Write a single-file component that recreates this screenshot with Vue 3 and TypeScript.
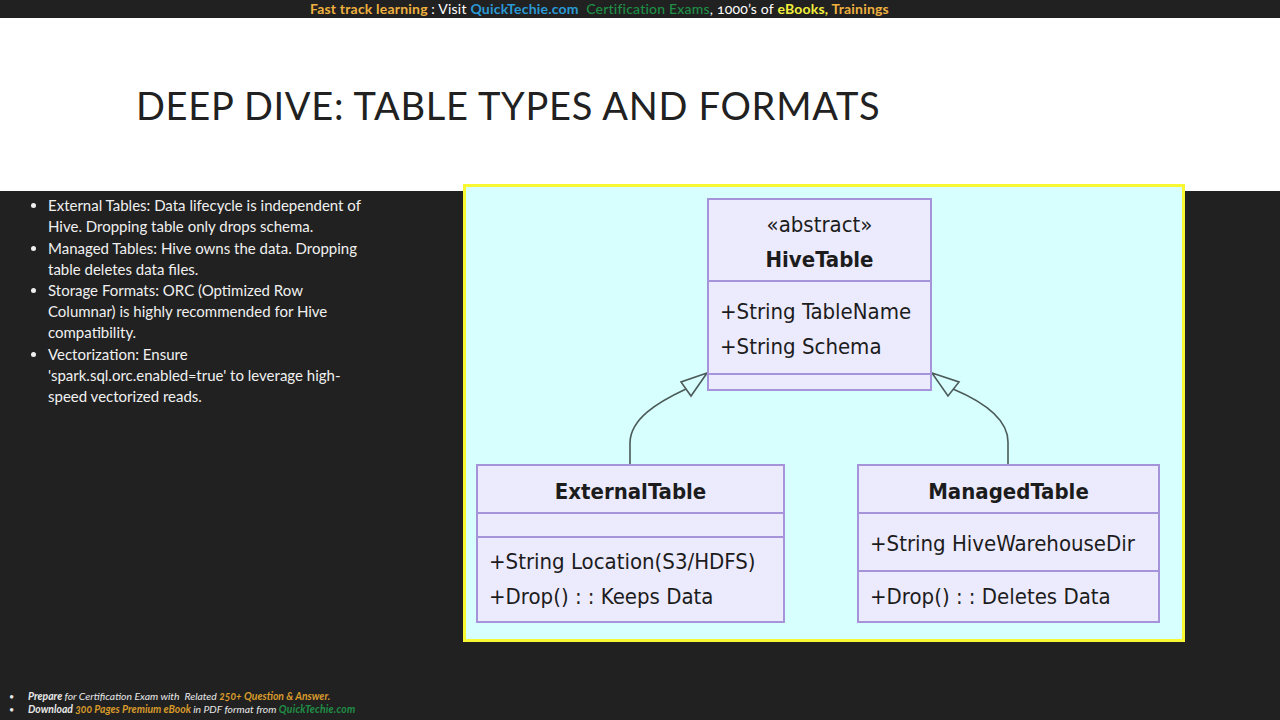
<script setup lang="ts">
interface Node { name: string; stereo?: string; sections: string[][]; cls: string }
const nodes: Node[] = [
  { name: 'HiveTable', stereo: '«abstract»', sections: [['+String TableName', '+String Schema'], []], cls: 'hive' },
  { name: 'ExternalTable', sections: [[], ['+String Location(S3/HDFS)', '+Drop() : : Keeps Data']], cls: 'ext' },
  { name: 'ManagedTable', sections: [['+String HiveWarehouseDir'], ['+Drop() : : Deletes Data']], cls: 'man' },
]
const bullets: string[] = [
  'External Tables: Data lifecycle is independent of Hive. Dropping table only drops schema.',
  'Managed Tables: Hive owns the data. Dropping table deletes data files.',
  'Storage Formats: ORC (Optimized Row Columnar) is highly recommended for Hive compatibility.',
  "Vectorization: Ensure 'spark.sql.orc.enabled=true' to leverage high-speed vectorized reads.",
]
</script>

<template>
  <div class="slide">
    <div class="topbar"><span class="orange">Fast track learning </span><span class="white">: Visit </span><span class="blue">QuickTechie.com</span><span class="green">&nbsp; Certification Exams</span><span class="white">, 1000’s of </span><span class="yellow">eBooks, </span><span class="orange">Trainings</span></div>
    <header class="head"><h1>DEEP DIVE: TABLE TYPES AND FORMATS</h1></header>
    <main class="body">
      <ul class="points">
        <li v-for="b in bullets" :key="b">{{ b }}</li>
      </ul>
      <figure class="diagram">
        <svg class="edges" viewBox="0 0 716 452" width="716" height="452">
          <g fill="none" stroke="#4d5a5a" stroke-width="1.6">
            <path d="M164 278 V255 C165 232 190 216 220 202" />
            <path d="M542 278 V255 C542 236 525 218 487 202" />
            <path d="M241 186 L215 195 L225 209 Z" />
            <path d="M466 186 L493 195 L482 209 Z" />
          </g>
        </svg>
        <section v-for="n in nodes" :key="n.name" class="node" :class="n.cls">
          <div class="title">
            <div v-if="n.stereo" class="stereo">{{ n.stereo }}</div>
            <div class="name">{{ n.name }}</div>
          </div>
          <div v-for="(s, i) in n.sections" :key="i" class="sec" :class="{ empty: !s.length }">
            <div v-for="l in s" :key="l" class="line">{{ l }}</div>
          </div>
        </section>
      </figure>
    </main>
    <footer class="foot">
      <div class="fl"><span class="dot">•</span><span><b>Prepare </b>for Certification Exam with &nbsp;Related <b class="gold">250+ Question &amp; Answer.</b></span></div>
      <div class="fl"><span class="dot">•</span><span><b>Download </b><b class="gold">300 Pages Premium eBook </b>in PDF format from <b class="dgreen">QuickTechie.com</b></span></div>
    </footer>
  </div>
</template>

<style>
html, body { margin: 0; background: #212121; }
</style>

<style scoped>
.slide { width: 1280px; height: 720px; background: #212121; display: flex; flex-direction: column; overflow: hidden; font-family: Lato, "Liberation Sans", sans-serif; font-variant-numeric: oldstyle-nums; }
.topbar { height: 18px; line-height: 18px; text-align: left; padding-left: 310px; font-size: 14px; letter-spacing: 0.2px; color: #fff; white-space: pre; }
.orange { color: #eeb03f; font-weight: 700; }
.white { color: #fff; }
.blue { color: #2a9ad6; font-weight: 700; }
.green { color: #1f8f46; font-weight: 500; }
.yellow { color: #f2f03c; font-weight: 700; }
.head { height: 173px; background: #fff; padding-left: 136px; box-sizing: border-box; }
.head h1 { margin: 0; padding-top: 63px; font-size: 38px; line-height: 48px; font-weight: 400; letter-spacing: 0.72px; color: #212121; white-space: nowrap; }
.body { flex: 1; display: flex; min-height: 0; position: relative; }
.points { margin: 4px 0 0; padding: 0 0 0 48px; width: 318px; box-sizing: content-box; list-style: disc; color: #f0f0f0; font-size: 15px; line-height: 21px; flex: none; }
.points li { margin-bottom: 0.5px; }
.diagram { position: absolute; left: 463px; top: -7px; margin: 0; width: 722px; height: 458px; box-sizing: border-box; border: 3px solid #f8f832; background: #d6fffd; font-family: "DejaVu Sans", sans-serif; font-stretch: condensed; color: #1c1c1c; }
.edges { position: absolute; left: 0; top: 0; }
.node { position: absolute; box-sizing: border-box; background: #ecebfd; border: 2px solid #a594da; font-size: 22px; display: flex; flex-direction: column; }
.hive { left: 241px; top: 11px; width: 225px; height: 193px; }
.ext { left: 10px; top: 277px; width: 309px; height: 159px; }
.man { left: 391px; top: 277px; width: 303px; height: 159px; }
.stereo { height: 35px; line-height: 35px; }
.name { height: 35px; line-height: 35px; font-weight: 700; }
.title { text-align: center; }
.sec { border-top: 2px solid #a594da; padding: 0 11px; flex: none; }
.line { height: 35px; line-height: 35px; white-space: nowrap; }
.hive .title { height: 80px; box-sizing: border-box; padding-top: 7px; }
.hive .sec:nth-of-type(2) { height: 93px; padding-top: 12px; box-sizing: border-box; }
.hive .sec.empty { flex: 1; }
.ext .title, .man .title { height: 46px; box-sizing: border-box; padding-top: 8px; }
.ext .sec.empty { height: 24px; box-sizing: border-box; }
.ext .sec:not(.empty) { flex: 1; padding-top: 6px; box-sizing: border-box; }
.man .sec:nth-of-type(2) { height: 58px; box-sizing: border-box; padding-top: 12px; }
.man .sec:nth-of-type(3) { flex: 1; padding-top: 7px; box-sizing: border-box; }
.foot { position: absolute; left: 0; top: 690px; font-size: 10.4px; line-height: 13px; font-style: italic; color: #e8e8e8; }
.fl { display: flex; }
.dot { width: 28px; padding-left: 9px; box-sizing: border-box; font-style: normal; font-size: 9px; }
.foot b { font-weight: 700; }
.gold { color: #d79a2b; }
.dgreen { color: #1f8f46; letter-spacing: 0.2px; }
</style>
